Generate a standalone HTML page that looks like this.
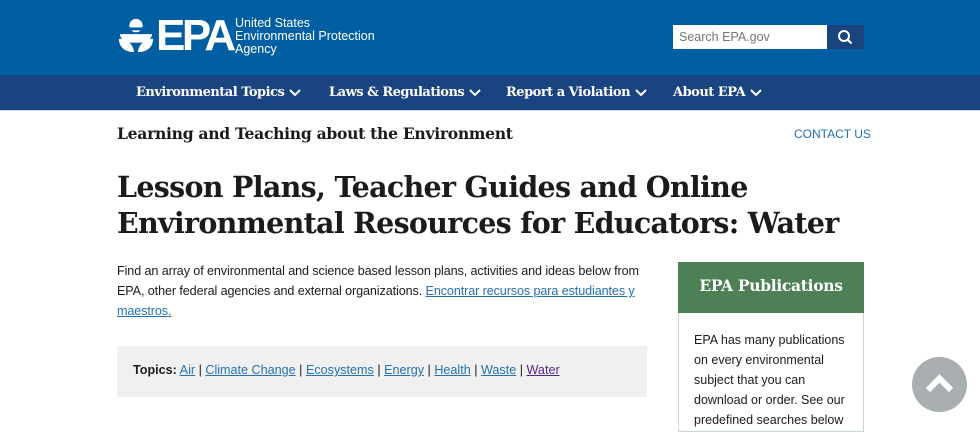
<!DOCTYPE html>
<html><head><meta charset="utf-8"><style>
*{margin:0;padding:0;box-sizing:border-box}
body{width:980px;height:427px;overflow:hidden;background:#fff;font-family:"Liberation Sans",sans-serif;color:#1b1b1b;position:relative}
.hdr{position:absolute;left:0;top:0;width:980px;height:75px;background:#005ea2}
.nav{position:absolute;left:0;top:75px;width:980px;height:36px;background:#1a4480;border-bottom:1px solid #c9d4e3}
.nav span{position:absolute;top:10px;color:#fff;font-family:"DejaVu Serif",serif;font-weight:bold;font-size:13px;letter-spacing:-0.5px;white-space:nowrap}
.nav svg{vertical-align:middle;margin-left:5px}
.serif{font-family:"DejaVu Serif",serif;font-weight:bold}
a{color:#2471b5;text-decoration:underline}
</style></head><body>
<div class="hdr">
 <svg style="position:absolute;left:117px;top:17px" width="38" height="38" viewBox="0 0 40 38">
  <circle cx="20" cy="8" r="7" fill="#fff"/><rect x="8" y="10" width="24" height="3" fill="#005ea2"/>
  <path d="M3 17h34c-1 6-6 9-11 9h-12c-5 0-10-3-11-9z" fill="#fff"/>
  <path d="M2 22c8 0 15 5 16 14c-9 0-16-5-16-14zM38 22c-8 0-15 5-16 14c9 0 16-5 16-14z" fill="#fff"/>
 </svg>
 <div style="position:absolute;left:156px;top:14px;color:#fff;font-weight:bold;font-size:44px;letter-spacing:-3.5px;line-height:44px">EPA</div>
 <div style="position:absolute;left:235px;top:17px;color:#fff;font-size:12.5px;line-height:13px">United States<br>Environmental Protection<br>Agency</div>
 <div style="position:absolute;left:673px;top:25px;width:155px;height:24px;background:#fff;font-size:12.5px;color:#71767a;padding:5px 6px">Search EPA.gov</div>
 <div style="position:absolute;left:827px;top:25px;width:37px;height:24px;background:#1a4480;border-radius:0 2px 2px 0">
  <svg width="37" height="24"><circle cx="17" cy="11" r="5" stroke="#fff" stroke-width="2" fill="none"/><path d="M20.5 14.5l4 4" stroke="#fff" stroke-width="2.2"/></svg></div>
</div>
<div class="nav">
 <span style="left:136px">Environmental Topics<svg width="12" height="8"><path d="M1 1l5 5 5-5" stroke="#fff" stroke-width="2" fill="none"/></svg></span>
 <span style="left:329px">Laws &amp; Regulations<svg width="12" height="8"><path d="M1 1l5 5 5-5" stroke="#fff" stroke-width="2" fill="none"/></svg></span>
 <span style="left:506px">Report a Violation<svg width="12" height="8"><path d="M1 1l5 5 5-5" stroke="#fff" stroke-width="2" fill="none"/></svg></span>
 <span style="left:673px">About EPA<svg width="12" height="8"><path d="M1 1l5 5 5-5" stroke="#fff" stroke-width="2" fill="none"/></svg></span>
</div>
<div class="serif" style="position:absolute;left:117px;top:124px;font-size:15.6px;letter-spacing:-0.3px;color:#1b1b1b">Learning and Teaching about the Environment</div>
<div style="position:absolute;left:794px;top:127px;font-size:12px;color:#2471b5">CONTACT US</div>
<div class="serif" style="position:absolute;left:117px;top:169px;font-size:28.5px;line-height:36px;letter-spacing:-0.7px;color:#1b1b1b;white-space:nowrap">Lesson Plans, Teacher Guides and Online<br>Environmental Resources for Educators: Water</div>
<div style="position:absolute;left:117px;top:261px;width:560px;font-size:12.6px;line-height:20px;color:#1b1b1b;white-space:nowrap;letter-spacing:-0.1px">Find an array of environmental and science based lesson plans, activities and ideas below from<br>EPA, other federal agencies and external organizations. <a>Encontrar recursos para estudiantes y</a><br><a>maestros.</a></div>
<div style="position:absolute;left:117px;top:346px;width:530px;height:51px;background:#f0f0f0;font-size:12.6px;padding:17px 16px">
 <b>Topics:</b> <a>Air</a> | <a>Climate Change</a> | <a>Ecosystems</a> | <a>Energy</a> | <a>Health</a> | <a>Waste</a> | <a style="color:#54278f">Water</a></div>
<div style="position:absolute;left:678px;top:262px;width:186px;height:170px;border:1px solid #c5d9c8">
 <div class="serif" style="height:51px;background:#4d8055;color:#fff;font-size:15.5px;letter-spacing:-0.3px;text-align:center;line-height:48px;margin:-1px -1px 0">EPA Publications</div>
 <div style="padding:17px 15px;font-size:12.5px;line-height:20px">EPA has many publications on every environmental subject that you can download or order. See our predefined searches below</div>
</div>
<div style="position:absolute;left:912px;top:357px;width:55px;height:55px;border-radius:50%;background:#a9aeb1">
 <svg width="55" height="55"><path d="M16 33l11.5-11.5L39 33" stroke="#fff" stroke-width="6" fill="none"/></svg></div>
</body></html>
